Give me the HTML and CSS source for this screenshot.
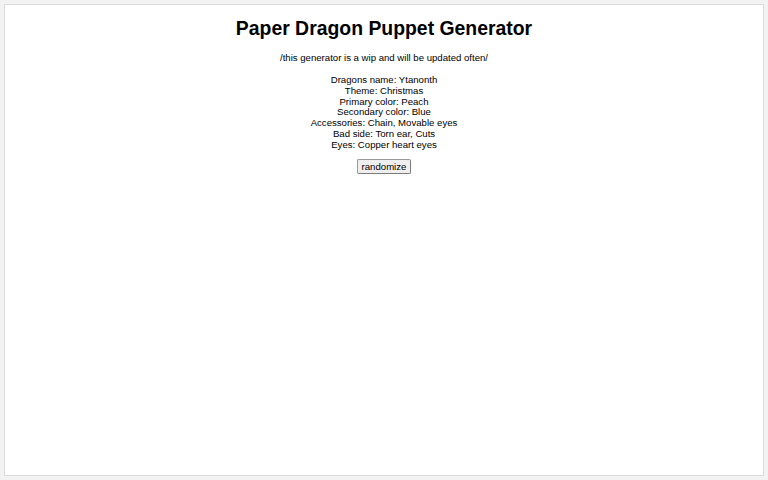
FILE: index.html
```html
<!DOCTYPE html>
<html lang="en">
<head>
    <meta charset="UTF-8">
    <meta name="viewport" content="width=device-width, initial-scale=1.0">
    <title>Paper Dragon Puppet Generator</title>
    <link rel="stylesheet" href="styles.css">
</head>
<body>

<div class="page">
    <h1>Paper Dragon Puppet Generator</h1>
    <p class="note">/this generator is a wip and will be updated often/</p>

    <div class="result" id="result">
        Dragons name: Ytanonth<br>
        Theme: Christmas<br>
        Primary color: Peach<br>
        Secondary color: Blue<br>
        Accessories: Chain, Movable eyes<br>
        Bad side: Torn ear, Cuts<br>
        Eyes: Copper heart eyes
    </div>

    <button type="button" class="randomize">randomize</button>
</div>

</body>
</html>
```

FILE: styles.css
```css
body {
    margin: 0;
    padding: 4px;
    background-color: #f2f2f2;
    font-family: "Liberation Sans", Arial, sans-serif;
}
.page {
    height: 472px;
    box-sizing: border-box;
    background-color: #fff;
    border: 1px solid #dcdcdc;
    text-align: center;
    padding-top: 12px;
}
h1 {
    font-size: 19.4px;
    line-height: 22px;
    margin: 0 0 13px 0;
    color: #000;
}
.note {
    font-size: 9.6px;
    line-height: 11px;
    margin: 0 0 12px 0;
}
.result {
    font-size: 9.6px;
    line-height: 10.8px;
    margin-bottom: 5px;
}
.randomize {
    font-family: "Liberation Sans", Arial, sans-serif;
    font-size: 9.6px;
    padding: 1px 4px;
    background-color: #efefef;
    border: 1px solid #9a9a9a;
    border-right-color: #7a7a7a;
    border-bottom-color: #7a7a7a;
    border-radius: 2px;
    color: #000;
}
```
